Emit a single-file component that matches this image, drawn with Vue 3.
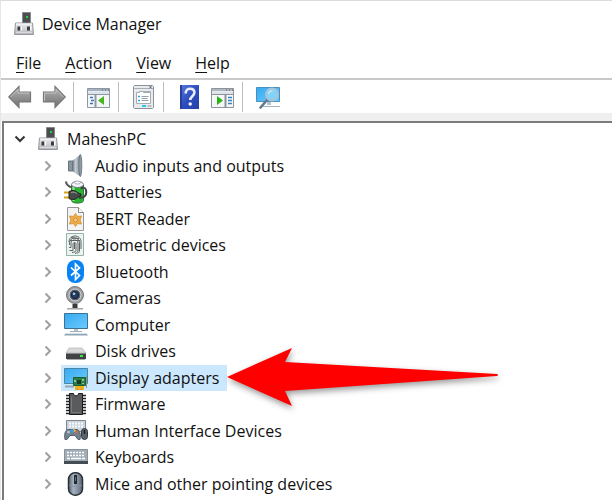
<template>
  <div class="window">
    <svg class="sprite" aria-hidden="true">
      <defs>
        <linearGradient id="g-screen" x1="0" y1="0" x2="1" y2="1">
          <stop offset="0" stop-color="#37a9ef" />
          <stop offset="1" stop-color="#6ccbff" />
        </linearGradient>
        <linearGradient id="g-metal" x1="0" y1="0" x2="0" y2="1">
          <stop offset="0" stop-color="#f0f0f2" />
          <stop offset="1" stop-color="#b4b5ba" />
        </linearGradient>
        <linearGradient id="g-arrow" x1="0" y1="0" x2="0" y2="1">
          <stop offset="0" stop-color="#b5b5b5" />
          <stop offset="1" stop-color="#6f6f6f" />
        </linearGradient>
        <linearGradient id="g-speaker" x1="0" y1="0" x2="1" y2="0">
          <stop offset="0" stop-color="#5c656d" />
          <stop offset="0.4" stop-color="#c5ced5" />
          <stop offset="1" stop-color="#7d8992" />
        </linearGradient>
        <linearGradient id="g-help" x1="0" y1="0" x2="1" y2="1">
          <stop offset="0" stop-color="#5b78dd" />
          <stop offset="0.5" stop-color="#2e4fc0" />
          <stop offset="1" stop-color="#2541a8" />
        </linearGradient>
        <linearGradient id="g-mouse" x1="0" y1="0" x2="1" y2="0">
          <stop offset="0" stop-color="#56606c" />
          <stop offset="0.35" stop-color="#a5b2c2" />
          <stop offset="1" stop-color="#5d6977" />
        </linearGradient>
      </defs>

      <symbol id="i-pc" viewBox="0 0 24 24">
        <path d="M10.500.5h8v11h-8z" fill="#4b4e51" stroke="#85878a" />
        <path d="M14 4h2v2h-2z" fill="#25d43a" />
        <path d="M3.500 11h17l1 11.500h-19z" fill="url(#g-metal)" stroke="#96979c" />
        <path d="M4 12h16" stroke="#fafafa" />
        <path d="M5.500 14.500h3v4h-3zM15 14.500h3v4h-3z" fill="#3b3d40" />
        <path d="M8.500 14.500H10v4H8.500zM18 14.500h1.500v4H18z" fill="#fff" />
        <path d="M4 20.500h16" stroke="#d9dade" />
      </symbol>

      <symbol id="i-back" viewBox="0 0 24 24">
        <path d="M.8 12 11 1.500V7h11.500v10H11v5.500z" fill="url(#g-arrow)" stroke="#777" stroke-width="1.200" />
        <path d="M2.500 12 10 4.200V8h11.500" fill="none" stroke="#ccc" stroke-width=".8" />
      </symbol>
      <symbol id="i-forward" viewBox="0 0 24 24">
        <path d="M23.200 12 13 1.500V7H1.500v10H13v5.500z" fill="url(#g-arrow)" stroke="#777" stroke-width="1.200" />
        <path d="M21.500 12 14 4.200V8H2.500v8" fill="none" stroke="#ccc" stroke-width=".8" />
      </symbol>
      <symbol id="i-tree" viewBox="0 0 24 24">
        <path d="M.5 3.500h22v19H.5z" fill="#f4f6f8" stroke="#8d98a5" />
        <path d="M1 4h21v2H1z" fill="#a5b1bf" />
        <path d="M15 5h1M18 5h1M21 5h1" stroke="#4d5864" />
        <path d="M1 6.500h21v3H1z" fill="#dce2e9" />
        <path d="M1 9.500h21" stroke="#8d98a5" />
        <path d="M8.500 10v12" stroke="#8d98a5" stroke-width="2" />
        <path d="M3 12.500h3M4 15.500h3M3 18.500h3" stroke="#3c73b5" stroke-width="1.300" />
        <path d="M17 11v9l-6-4.500z" fill="#47b51d" />
      </symbol>
      <symbol id="i-properties" viewBox="0 0 24 24">
        <path d="M2.500.5h18l1 1v21l-1 1h-18l-1-1v-21z" fill="#e9ebee" stroke="#8b929a" />
        <path d="M2 3.500h19" stroke="#a8afb8" />
        <path d="M17.500 1.500l2 1.500m0-1.500-2 1.500" stroke="#38434e" stroke-width=".8" />
        <path d="M4.500 7.500h3v-1h4v1h7v11h-14z" fill="#fff" stroke="#a5abb2" />
        <path d="M11.500 6.500h3v1m0-1h4v1" fill="none" stroke="#a5abb2" />
        <path d="M6 11.500h2M6 15.500h2" stroke="#26a9e2" stroke-width="1.500" />
        <path d="M9.500 11.500h7M9.500 13.500h6M9.500 15.500h7" stroke="#9ba1a8" />
        <path d="M10 20h4v2h-4z" fill="#23c6f7" />
        <path d="M15.500 20h4v2h-4z" fill="#babec3" />
      </symbol>
      <symbol id="i-help" viewBox="0 0 24 24">
        <path d="M3 0h19v24H3z" fill="url(#g-help)" />
        <path d="M3 0h2v24H3z" fill="#263f9b" />
        <path d="M8.700 8.400C8.700 5 10.500 3.800 13 3.800c2.700 0 4.400 1.400 4.400 3.800 0 3.400-4.200 3.800-4.200 7.400" fill="none" stroke="#e9edfa" stroke-width="2.600" />
        <circle cx="13.200" cy="19" r="1.700" fill="#fff" />
      </symbol>
      <symbol id="i-action" viewBox="0 0 24 24">
        <path d="M.5 3.500h22v19H.5z" fill="#f4f6f8" stroke="#8d949c" />
        <path d="M1 4h21v2H1z" fill="#b0b7bf" />
        <path d="M15 5h1M18 5h1M21 5h1" stroke="#4d5864" />
        <path d="M1 6.500h21v3H1z" fill="#dfe3e7" />
        <path d="M1 9.500h21" stroke="#8d949c" />
        <path d="M14.500 10v12" stroke="#8d949c" stroke-width="2" />
        <path d="M17 12.500h4M17 15.500h4M17 18.500h4" stroke="#3c83c5" stroke-width="1.300" />
        <path d="M6 11v9l6-4.500z" fill="#2cb315" />
      </symbol>
      <symbol id="i-scan" viewBox="0 0 24 24">
        <path d="M.5 2.500h23v14H.5z" fill="url(#g-screen)" stroke="#4791bd" />
        <path d="M11 17h4v3h-4z" fill="#b4c3cf" />
        <path d="M4 21.500h20" stroke="#a2b4c2" />
        <path d="m11.500 14.500-7 8" stroke="#647889" stroke-width="2.600" stroke-linecap="round" />
        <circle cx="16" cy="9.500" r="6" fill="#82d2f9" stroke="#a9c4d5" stroke-width="1.800" />
        <path d="M12.500 9a3.700 3.700 0 0 1 4-3" fill="none" stroke="#c7ecff" stroke-width="1.300" />
      </symbol>

      <symbol id="i-audio" viewBox="0 0 24 24">
        <path d="M4.500 7h4v10h-4z" fill="#8797a2" stroke="#69747e" />
        <path d="M8 7 16.500.5v22L8 17z" fill="url(#g-speaker)" />
        <ellipse cx="16.300" cy="11.500" rx="1.500" ry="11" fill="#8f9ba4" stroke="#616d76" stroke-width=".8" />
      </symbol>
      <symbol id="i-battery" viewBox="0 0 24 24">
        <path d="M7.500 5v15.500c0 3.500 12 3.500 12 0V5z" fill="#26b431" stroke="#3c6f40" />
        <path d="M9.500 6v15" stroke="#93ef8d" stroke-width="2" />
        <ellipse cx="13.500" cy="4.500" rx="6" ry="3" fill="#f3f3fb" stroke="#74747c" />
        <ellipse cx="13.500" cy="2.500" rx="3" ry="1.500" fill="#fff" stroke="#8c85a0" stroke-width=".7" />
        <path d="M2 1.500c0 4 3 4 5 6" fill="none" stroke="#53555a" stroke-width="2" />
        <path d="M15 18c6 0 8-3 7-8-.7-3-4-3-5-1" fill="none" stroke="#414543" stroke-width="2" />
        <path d="M0 12.500h6M0 17.500h6" stroke="#d4a419" stroke-width="2.200" />
        <path d="M5 11.500c4-2 7-1 9 1.500l3 1v2l-3 1c-2 2.500-6 3.500-9 1.500z" fill="#454947" stroke="#222" />
        <path d="M7 12.500c3-1 4 0 6 1" fill="none" stroke="#a0a6a3" />
      </symbol>
      <symbol id="i-card" viewBox="0 0 24 24">
        <path d="M3.500.5h11l5 5v18h-16z" fill="#f3f3f3" stroke="#969696" />
        <path d="M14.500.5v5h5" fill="#fff" stroke="#868686" />
        <path d="m11.500 6.500 2 3 4-.5-1.500 4 1.500 4-4-.5-2 3-2-3-4 .5 1.500-4-1.500-4 4 .5z" fill="#f0ae48" stroke="#d9973f" />
        <circle cx="11.500" cy="13" r="2" fill="#f8cf86" stroke="#cf8b36" />
      </symbol>
      <symbol id="i-finger" viewBox="0 0 24 24">
        <path d="M2.500.5h17v22h-17z" fill="#edf3f1" stroke="#8fb4aa" />
        <g fill="none" stroke="#5b6261">
          <path d="M5 9c0-8 12-8 12 0v7M5.500 12V9.500c0-5.500 10-6 10 0v7.500c0 2-1 3-2 3.500" />
          <path d="M5 14.500h2V10c0-4 7-4 7 0v7c0 2-1 3-3 3.500M5.500 17.500H9V11c0-2 3-2 3 0v6c0 2-1 2-4 2.500" />
          <path d="M10.500 10v6M7 4.500l8 1M6 7.500h10" />
        </g>
      </symbol>
      <symbol id="i-bluetooth" viewBox="0 0 24 24">
        <rect x="3" width="17" height="23" rx="8" fill="#0a83f5" />
        <path d="m7 7.500 8.500 8-4 4V4l4 4L7 15.500" fill="none" stroke="#fff" stroke-width="1.700" />
      </symbol>
      <symbol id="i-camera" viewBox="0 0 24 24">
        <circle cx="11" cy="9" r="8.500" fill="#9b9da0" stroke="#77797b" />
        <circle cx="11" cy="9" r="6" fill="#5b6674" stroke="#d8dbde" />
        <circle cx="11" cy="9" r="3.700" fill="#253e63" stroke="#17202e" />
        <circle cx="10" cy="7.800" r="1.300" fill="#a9c9ee" />
        <path d="M8.500 18h5v4h-5z" fill="#383a3c" />
        <path d="M3 22.800h16" stroke="#9da0a2" stroke-width="1.400" />
      </symbol>
      <symbol id="i-computer" viewBox="0 0 24 24">
        <path d="M.5.5h23v15H.5z" fill="url(#g-screen)" stroke="#3e7092" />
        <path d="M10 16h4v2h-4z" fill="#b7c4cd" />
        <path d="M6 18.500h12" stroke="#9fb0bc" />
        <path d="M1.500 20.500h21l1.500 2H0z" fill="#8fa5b5" />
        <path d="M2 20.500h20" stroke="#d4e0e8" />
      </symbol>
      <symbol id="i-disk" viewBox="0 0 24 24">
        <path d="M5 9h13l4 5H2z" fill="#d9d9d9" stroke="#b5b5b5" stroke-width=".7" />
        <path d="M2 14h20v6H2z" fill="#414345" />
        <path d="M2 14.500h20" stroke="#878a8c" />
        <path d="M16 16h3v2h-3z" fill="#38ed40" />
        <path d="M3 20.500h18" stroke="#a7a7a7" />
      </symbol>
      <symbol id="i-display" viewBox="0 0 24 24">
        <path d="M.5 2.500h23v15H.5z" fill="url(#g-screen)" stroke="#4b86a8" />
        <path d="M1 20.500h9" stroke="#91a6b5" stroke-width="2" />
        <path d="M9.500 11.500h12v8h-12z" fill="#298146" stroke="#1e5d35" />
        <path d="M13 14h4v4h-4z" fill="#203a2a" />
        <path d="M10 14h2v2h-2zM18 13h2v2h-2zM18 17h2v1h-2z" fill="#8bc994" />
        <path d="M22.500 10v12" stroke="#87988b" />
        <path d="M11 20h9v4h-9z" fill="#f2b020" />
        <path d="M13.500 22v2M17 22v2" stroke="#b98a22" stroke-width=".7" />
      </symbol>
      <symbol id="i-chip" viewBox="0 0 24 24">
        <path d="M2 3.500h4M2 6.500h4M2 9.500h4M2 12.500h4M2 15.500h4M2 18.500h4M2 21.500h4M18 3.500h4M18 6.500h4M18 9.500h4M18 12.500h4M18 15.500h4M18 18.500h4M18 21.500h4" stroke="#222" stroke-width="1.600" />
        <path d="M5.500 1.500h4c0 3 5 3 5 0h4v21h-13z" fill="#595b5d" stroke="#1b1c1d" />
        <path d="M7.500 5v15.500h9" fill="none" stroke="#77797b" />
      </symbol>
      <symbol id="i-hid" viewBox="0 0 24 24">
        <path d="M2.500 1.500h19v11h-19z" fill="#ccd4dc" stroke="#7c8995" />
        <path d="M5 4.500h14M5 7.500h14" stroke="#f7fafd" stroke-width="1.800" stroke-dasharray="2 1" />
        <path d="M1 20.500c-1-5 0-9 3-10h9c3 1 4 5 3 10h-2l-3-4H6l-3 4z" fill="#73808d" stroke="#55616d" />
        <circle cx="4.500" cy="13" r="1.500" fill="#b5c1cc" />
        <circle cx="10" cy="11.500" r="1.500" fill="#f3b338" />
        <circle cx="8" cy="12" r="1.800" fill="#289bec" />
        <circle cx="12.500" cy="13" r="1.300" fill="#e6652f" />
        <rect x="17.500" y="9.500" width="6" height="11" rx="3" fill="#59636f" stroke="#303942" />
        <path d="M20.500 11v4" stroke="#181d23" stroke-width="1.500" />
      </symbol>
      <symbol id="i-keyboard" viewBox="0 0 24 24">
        <path d="M.5 4.500h23v14H.5z" fill="#a1adb7" stroke="#86929c" />
        <path d="M3 7.500h18M3 10.500h18" stroke="#fff" stroke-width="1.700" stroke-dasharray="2 1" />
        <path d="M3 13.500h3m1 0h10m1 0h3" stroke="#fff" stroke-width="1.400" />
        <path d="M0 16h24v3H0z" fill="#454d54" />
      </symbol>
      <symbol id="i-mouse" viewBox="0 0 24 24">
        <rect x="4.500" y=".8" width="14" height="22.400" rx="6.500" fill="url(#g-mouse)" stroke="#2b3036" stroke-width="1.500" />
        <path d="M5 13c4 2 9 2 13 0" fill="none" stroke="#8794a3" />
        <path d="M11.500 3v9" stroke="#24292e" stroke-width="3" />
        <path d="M11.500 5v4" stroke="#626b74" />
      </symbol>
    </svg>

    <header class="title-bar">
      <svg class="icon"><use href="#i-pc" /></svg>
      <h1>Device Manager</h1>
    </header>

    <nav class="menu-bar">
      <button v-for="item in menus" :key="item" type="button">
        <u>{{ item[0] }}</u>{{ item.slice(1) }}
      </button>
    </nav>

    <div class="toolbar">
      <div v-for="(group, i) in tools" :key="i" class="tool-group">
        <button v-for="tool in group" :key="tool.icon" type="button" :aria-label="tool.label">
          <svg class="icon"><use :href="'#i-' + tool.icon" /></svg>
        </button>
      </div>
    </div>

    <main class="tree">
      <div class="row root">
        <button class="toggle" type="button" aria-label="Toggle MaheshPC" @click="open = !open">
          <svg viewBox="0 0 12 12">
            <path v-if="open" d="m1.500 3.500 4.500 4.500 4.500-4.500" />
            <path v-else d="m3.500 1.500 4.500 4.500-4.500 4.500" />
          </svg>
        </button>
        <button class="node" type="button">
          <svg class="icon"><use href="#i-pc" /></svg>
          <span>MaheshPC</span>
        </button>
      </div>
      <template v-if="open">
        <div v-for="device in devices" :key="device.name" class="row">
          <button class="toggle" type="button" :aria-label="'Expand ' + device.name">
            <svg viewBox="0 0 12 12"><path d="m3.500 1.500 4.500 4.500-4.500 4.500" /></svg>
          </button>
          <button
            class="node"
            :class="{ selected: selected === device.name }"
            type="button"
            @click="selected = device.name"
          >
            <svg class="icon"><use :href="'#i-' + device.icon" /></svg>
            <span>{{ device.name }}</span>
          </button>
          <svg v-if="device.name === 'Display adapters'" class="pointer" viewBox="0 0 272 60">
            <path d="M0 29 65 0l-7 14 212 12q2 1 0 2L58 43l7 15z" />
          </svg>
        </div>
      </template>
    </main>
  </div>
</template>

<script setup>
import { ref } from 'vue'

const open = ref(true)
const selected = ref('Display adapters')

const menus = ['File', 'Action', 'View', 'Help']

const tools = [
  [
    { icon: 'back', label: 'Back' },
    { icon: 'forward', label: 'Forward' },
  ],
  [{ icon: 'tree', label: 'Show/Hide Console Tree' }],
  [{ icon: 'properties', label: 'Properties' }],
  [
    { icon: 'help', label: 'Help' },
    { icon: 'action', label: 'Show/Hide Action Pane' },
  ],
  [{ icon: 'scan', label: 'Scan for hardware changes' }],
]

const devices = [
  { name: 'Audio inputs and outputs', icon: 'audio' },
  { name: 'Batteries', icon: 'battery' },
  { name: 'BERT Reader', icon: 'card' },
  { name: 'Biometric devices', icon: 'finger' },
  { name: 'Bluetooth', icon: 'bluetooth' },
  { name: 'Cameras', icon: 'camera' },
  { name: 'Computer', icon: 'computer' },
  { name: 'Disk drives', icon: 'disk' },
  { name: 'Display adapters', icon: 'display' },
  { name: 'Firmware', icon: 'chip' },
  { name: 'Human Interface Devices', icon: 'hid' },
  { name: 'Keyboards', icon: 'keyboard' },
  { name: 'Mice and other pointing devices', icon: 'mouse' },
]
</script>

<style>
body {
  margin: 0;
}
</style>

<style scoped>
.window {
  display: flex;
  flex-direction: column;
  box-sizing: border-box;
  min-height: 100vh;
  border-top: 1px solid #dcdcdc;
  border-left: 1px solid #e6e6e6;
  background: #fff;
  color: #111;
  font-family: "Open Sans", "Noto Sans", sans-serif;
  font-size: 16px;
  line-height: 24px;
}

.sprite {
  position: absolute;
  width: 0;
  height: 0;
}

.icon {
  display: block;
  flex: none;
  width: 24px;
  height: 24px;
}

button {
  padding: 0;
  border: 0;
  background: none;
  color: inherit;
  font: inherit;
}

.title-bar {
  display: flex;
  align-items: center;
  gap: 6px;
  height: 46px;
  padding-left: 11px;
}

.title-bar h1 {
  margin: 0;
  font-size: 16px;
  font-weight: 400;
}

.menu-bar {
  display: flex;
  align-items: center;
  gap: 24px;
  height: 31px;
  padding-left: 15px;
  border-bottom: 2px solid #c9c9c9;
}

.menu-bar u {
  text-decoration-thickness: 1px;
  text-underline-offset: 3px;
}

.toolbar {
  display: flex;
  align-items: center;
  height: 32px;
  padding-left: 7px;
  padding-top: 1px;
  border-bottom: 8px solid #efefef;
}

.tool-group {
  display: flex;
  align-items: center;
  gap: 10px;
}

.tool-group + .tool-group::before {
  content: "";
  width: 1px;
  height: 30px;
  margin: 0 3px 0 7px;
  background: #bdbdbd;
}

.tree {
  display: grid;
  flex: 1;
  grid-auto-rows: minmax(26px, 1fr);
  margin-left: 1px;
  padding: 3px 0;
  border-top: 2px solid #7b7b7b;
  border-left: 2px solid #7b7b7b;
}

.row {
  display: flex;
  align-items: center;
  padding-left: 38px;
}

.row.root {
  padding-left: 10px;
}

.toggle {
  width: 12px;
  height: 24px;
  margin-right: 7px;
}

.toggle svg {
  display: block;
  width: 12px;
  height: 12px;
  fill: none;
  stroke: #a0a0a0;
  stroke-width: 2;
}

.root .toggle svg {
  stroke: #333;
}

.node {
  display: flex;
  align-items: center;
  gap: 7px;
  height: 26px;
  padding: 0 8px 0 3px;
}

.node.selected {
  background: #cce8ff;
}

.pointer {
  width: 272px;
  height: 60px;
  margin: -17px 0;
  fill: #f00;
  filter: drop-shadow(1px 3px 3px rgba(0, 0, 0, 0.4));
}
</style>
